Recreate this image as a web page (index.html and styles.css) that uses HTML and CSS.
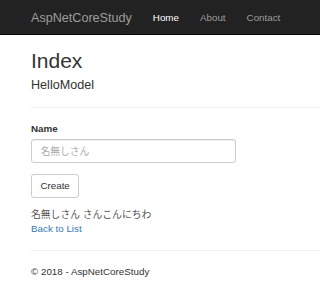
FILE: index.html
```html
<!DOCTYPE html>
<html lang="ja">
<head>
<meta charset="utf-8">
<title>Index - AspNetCoreStudy</title>
<link rel="stylesheet" href="styles.css">
</head>
<body>
<nav class="navbar">
  <div class="navbar-inner">
    <a class="brand" href="#">AspNetCoreStudy</a>
    <ul class="nav">
      <li><a class="nav-link active" href="#">Home</a></li>
      <li><a class="nav-link" href="#">About</a></li>
      <li><a class="nav-link" href="#">Contact</a></li>
    </ul>
  </div>
</nav>
<main class="body-content">
  <h2 class="title">Index</h2>
  <h4 class="subtitle">HelloModel</h4>
  <hr class="rule">
  <form class="form">
    <div class="form-group">
      <label class="control-label" for="name">Name</label>
      <input class="form-control" id="name" type="text" placeholder="名無しさん">
    </div>
    <div class="form-group">
      <button class="btn" type="button">Create</button>
    </div>
  </form>
  <div class="message">名無しさん さんこんにちわ</div>
  <div class="back"><a class="link" href="#">Back to List</a></div>
  <hr class="rule">
  <footer class="footer"><p class="footer-text">© 2018 - AspNetCoreStudy</p></footer>
</main>
</body>
</html>
```
FILE: styles.css
```css
* { box-sizing: border-box; }
html, body { margin: 0; padding: 0; }
body {
  font-family: "Liberation Sans", Arial, "Noto Sans CJK JP", sans-serif;
  font-size: 9.8px;
  line-height: 14px;
  color: #333;
  background: #fff;
  width: 320px;
  overflow: hidden;
}
.navbar {
  height: 35px;
  background: #222;
  border-bottom: 1px solid #080808;
}
.navbar-inner {
  display: flex;
  align-items: flex-start;
  padding-left: 20.5px;
}
.brand {
  display: block;
  padding: 10.5px;
  font-size: 12.6px;
  line-height: 14px;
  color: #9d9d9d;
  text-decoration: none;
}
.nav {
  display: flex;
  list-style: none;
  margin: 0;
  padding: 0;
}
.nav-link {
  display: block;
  padding: 10.5px;
  line-height: 14px;
  color: #9d9d9d;
  text-decoration: none;
}
.nav-link.active { color: #fff; }
.body-content {
  padding-left: 31px;
}
.title {
  margin: 14px 0 7px;
  font-size: 21px;
  line-height: 23.1px;
  font-weight: 500;
}
.subtitle {
  margin: 7px 0 7px;
  font-size: 12.6px;
  line-height: 13.86px;
  font-weight: 500;
}
.rule {
  margin: 14px 0;
  border: 0;
  border-top: 1px solid #eee;
  height: 0;
}
.form { margin: 0; }
.form-group { margin-bottom: 10.5px; }
.control-label {
  display: block;
  font-weight: bold;
  margin-bottom: 3.5px;
}
.form-control {
  display: block;
  width: 205px;
  height: 23.8px;
  padding: 4.2px 8.4px;
  font-family: inherit;
  font-size: 9.8px;
  color: #555;
  border: 1px solid #ccc;
  border-radius: 2.8px;
  box-shadow: inset 0 1px 1px rgba(0,0,0,.075);
  margin: 0;
}
.form-control::placeholder { color: #aaa; opacity: 1; }
.btn {
  display: inline-block;
  height: 23.8px;
  padding: 4.2px 8.4px;
  font-family: inherit;
  font-size: 9.8px;
  line-height: 14px;
  color: #333;
  background: #fff;
  border: 1px solid #ccc;
  border-radius: 2.8px;
  margin: 0;
}
.message { color: #555; }
.link { color: #337ab7; text-decoration: none; }
.footer-text { margin: 0 0 7px; }
```
